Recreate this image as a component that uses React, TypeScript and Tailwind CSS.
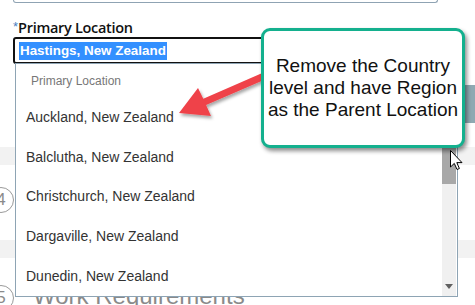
import React from "react";

const items = [
  "Auckland, New Zealand",
  "Balclutha, New Zealand",
  "Christchurch, New Zealand",
  "Dargaville, New Zealand",
  "Dunedin, New Zealand",
];

export default function App() {
  return (
    <div className="relative w-[475px] h-[305px] overflow-hidden bg-white font-['Liberation_Sans',Arial,sans-serif]">
      {/* page behind */}
      <div className="ml-[13px] w-[425px] h-[3px] border-x border-b border-[#8fa3b3] rounded-b-[3px]" />
      <div className="h-[34px] pl-[13px] pt-[16px] flex items-start">
        <span className="text-[#4a7fc0] text-[13px] leading-[13px] mt-[1px]">*</span>
        <span className="text-[#111] text-[14.5px] leading-[18px] font-['Open_Sans',sans-serif] font-semibold tracking-[-0.3px]">
          Primary Location
        </span>
      </div>
      <div className="ml-[13px] w-[450px] h-[27px] border-2 border-[#111] rounded-[3px] flex items-center pl-[4px]">
        <span className="bg-[#3390ff] text-white font-bold text-[13.4px] h-[18px] leading-[18px] px-[1px]">
          Hastings, New Zealand
        </span>
      </div>
      <div className="mt-[21px] h-[38px] flex justify-end">
        <div className="w-[12px] h-full bg-[#8fa9b2]" />
      </div>
      <div className="mt-[24px] h-[18px] bg-[#f2f2f2]" />
      <div className="h-[75px] flex items-start pt-[22px]">
        <div className="ml-[-12px] w-[26px] h-[26px] rounded-full border border-[#9a9a9a] flex items-center justify-center text-[17px] text-[#8a8a8a]">
          4
        </div>
      </div>
      <div className="h-[18px] bg-[#f2f2f2]" />
      <div className="flex items-start pt-[27px]">
        <div className="ml-[-12px] w-[26px] h-[26px] rounded-full border border-[#9a9a9a] flex items-center justify-center text-[17px] text-[#8a8a8a]">
          5
        </div>
        <div className="ml-[19px] mt-[-4px] text-[24px] text-[#8a8a8a] leading-[30px]">Work Requirements</div>
      </div>

      {/* dropdown */}
      <div className="absolute left-[15px] top-[63px] w-[443px] h-[234px] border border-[#8ea4b4] bg-white flex">
        <div className="flex-1 flex flex-col">
          <div className="h-[34px] pl-[15px] flex items-center text-[12px] text-[#777]">Primary Location</div>
          {items.map((t) => (
            <div key={t} className="h-[40px] pl-[10px] flex items-center text-[14px] text-[#333]">
              {t}
            </div>
          ))}
        </div>
        <div className="w-[14px] mr-[1px] bg-[#f0f0f0] flex flex-col">
          <div className="h-[120px] bg-[#a8a8a8]" />
          <div className="flex-1 flex items-end justify-center pb-[7px]">
            <svg width="8" height="5" viewBox="0 0 8 5">
              <polygon points="0,0 8,0 4,5" fill="#606060" />
            </svg>
          </div>
        </div>
      </div>

      {/* arrow */}
      <svg className="absolute left-0 top-0" width="475" height="305" viewBox="0 0 475 305">
        <defs>
          <filter id="sh" x="-20%" y="-20%" width="140%" height="140%">
            <feDropShadow dx="1.5" dy="2.5" stdDeviation="1.5" floodColor="#000" floodOpacity="0.35" />
          </filter>
        </defs>
        <polygon
          points="179,113 198,88 203.3,98.7 264.6,72 267.4,78.4 206.1,105.1 211,116"
          fill="#ef434a"
          filter="url(#sh)"
        />
      </svg>

      {/* callout */}
      <div className="absolute left-[261px] top-[28px] w-[204px] h-[120px] border-[3px] border-[#14b08e] rounded-[9px] bg-white shadow-[2px_3px_4px_rgba(0,0,0,0.45)] pt-[24px] text-center text-[19px] leading-[22px] text-[#111]">
        Remove the Country
        <br />
        level and have Region
        <br />
        as the Parent Location
      </div>

      {/* cursor */}
      <svg className="absolute left-[450px] top-[150px]" width="14" height="22" viewBox="0 0 14 22">
        <path d="M0.5,0.5 L0.5,17 L4.3,13.4 L7,19.5 L9.4,18.5 L6.8,12.6 L12,12.6 Z" fill="#fff" stroke="#000" strokeWidth="1" strokeLinejoin="round" />
      </svg>
    </div>
  );
}
